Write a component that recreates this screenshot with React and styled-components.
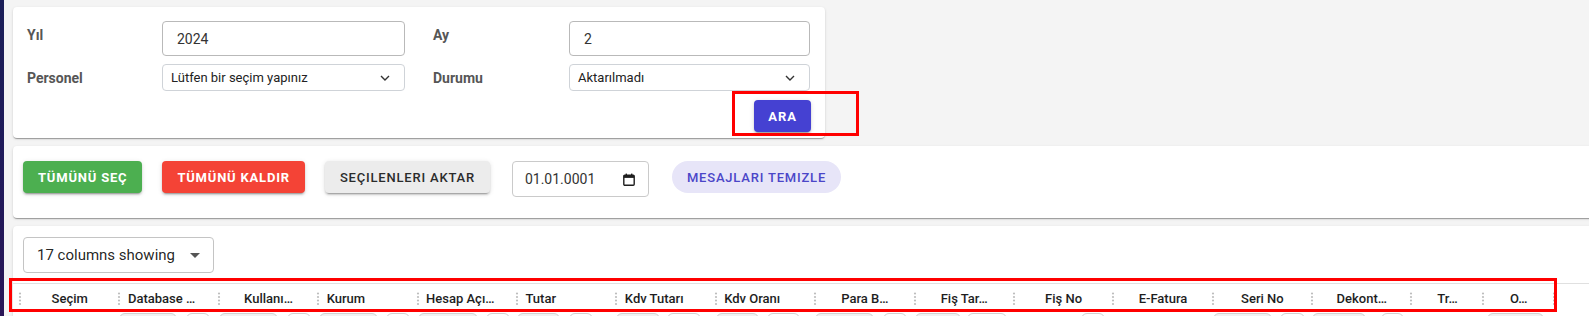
import React from "react";
import styled, { createGlobalStyle } from "styled-components";

const GlobalStyle = createGlobalStyle`
  html, body {
    margin: 0;
    padding: 0;
    background: #f4f4f4;
    overflow: hidden;
  }
  body {
    font-family: Roboto, "Liberation Sans", Arial, sans-serif;
    color: #333;
  }
  * {
    box-sizing: border-box;
  }
`;

const Page = styled.div`
  display: flex;
  width: 1589px;
  height: 316px;
  overflow: hidden;
`;

const SideEdge = styled.div`
  width: 4px;
  flex-shrink: 0;
  background: linear-gradient(180deg, #1b1f58 0%, #201a5a 55%, #2a1657 100%);
`;

const Main = styled.main`
  flex: 1;
  min-width: 0;
  padding: 7px 0 0 9px;
  display: flex;
  flex-direction: column;
  align-items: flex-start;
  gap: 8px;
`;

const Card = styled.section`
  background: #fff;
  border-radius: 4px;
  box-shadow: 0 2px 1px -1px rgba(0, 0, 0, 0.2), 0 1px 1px 0 rgba(0, 0, 0, 0.14),
    0 1px 3px 0 rgba(0, 0, 0, 0.12);
`;

const SearchCard = styled(Card)`
  width: 812px;
  padding: 14px 14px 6px 14px;
`;

const WideCard = styled(Card)`
  align-self: stretch;
  margin-right: -20px;
`;

const FormGrid = styled.div`
  display: grid;
  grid-template-columns: 107px 243px 108px 241px;
  grid-template-rows: 35px 27px;
  column-gap: 28px;
  row-gap: 8px;
`;

const Label = styled.label`
  padding-top: 6px;
  font-size: 14px;
  line-height: 16px;
  font-weight: 700;
  color: #565656;
`;

const TextInput = styled.div`
  display: flex;
  align-items: center;
  height: 35px;
  padding: 0 14px;
  border: 1px solid #b9b9b9;
  border-radius: 4px;
  font-size: 14px;
  color: #333;
`;

const SelectBox = styled.div`
  display: flex;
  align-items: center;
  justify-content: space-between;
  height: 27px;
  padding: 0 14px 0 8px;
  border: 1px solid #cfd3d8;
  border-radius: 4px;
  font-size: 13px;
  color: #222;
`;

const ActionRow = styled.div`
  position: relative;
  display: flex;
  justify-content: flex-end;
  margin-top: 9px;
`;

const Highlight = styled.div`
  position: absolute;
  top: ${(p) => p.$top}px;
  left: ${(p) => (p.$left !== undefined ? `${p.$left}px` : "auto")};
  right: ${(p) => (p.$right !== undefined ? `${p.$right}px` : "auto")};
  width: ${(p) => p.$w}px;
  height: ${(p) => p.$h}px;
  border: 3px solid #ff0000;
  pointer-events: none;
  z-index: 2;
`;

const SearchButton = styled.button`
  height: 32px;
  padding: 0 14px;
  border: none;
  border-radius: 4px;
  background: #4541d2;
  color: #fff;
  font-family: inherit;
  font-size: 13px;
  font-weight: 700;
  letter-spacing: 1px;
  box-shadow: 0 3px 1px -2px rgba(0, 0, 0, 0.2), 0 2px 2px 0 rgba(0, 0, 0, 0.14),
    0 1px 5px 0 rgba(0, 0, 0, 0.12);
`;

const ButtonBar = styled.div`
  display: flex;
  align-items: flex-start;
  gap: 20px;
  padding: 15px 10px 21px;
`;

const variants = {
  success: { bg: "#4caf50", fg: "#fff", weight: 700, radius: 4, shadow: true },
  danger: { bg: "#f44336", fg: "#fff", weight: 700, radius: 4, shadow: true },
  neutral: { bg: "#ececec", fg: "#2b2b2b", weight: 500, radius: 4, shadow: true },
  soft: { bg: "#e7e5f8", fg: "#4b46c8", weight: 500, radius: 16, shadow: false },
};

const ActionButton = styled.button`
  height: 32px;
  padding: 0 15px;
  margin-left: ${(p) => p.$ml || 0}px;
  border: none;
  border-radius: ${(p) => variants[p.$variant].radius}px;
  background: ${(p) => variants[p.$variant].bg};
  color: ${(p) => variants[p.$variant].fg};
  font-family: inherit;
  font-size: 13px;
  font-weight: ${(p) => variants[p.$variant].weight};
  letter-spacing: 0.8px;
  white-space: nowrap;
  box-shadow: ${(p) =>
    variants[p.$variant].shadow
      ? "0 3px 1px -2px rgba(0,0,0,.2), 0 2px 2px 0 rgba(0,0,0,.14), 0 1px 5px 0 rgba(0,0,0,.12)"
      : "none"};
`;

const DateField = styled.div`
  display: flex;
  align-items: center;
  justify-content: space-between;
  width: 137px;
  height: 36px;
  margin-left: 2px;
  padding: 0 13px 0 12px;
  border: 1px solid #cacaca;
  border-radius: 4px;
  font-size: 14px;
  color: #333;
`;

const TableToolbar = styled.div`
  padding: 11px 10px 10px;
`;

const ColumnsSelect = styled.div`
  display: flex;
  align-items: center;
  justify-content: space-between;
  width: 191px;
  height: 36px;
  padding: 0 6px 0 13px;
  border: 1px solid #c4c4c4;
  border-radius: 4px;
  font-size: 15px;
  color: rgba(0, 0, 0, 0.87);
`;

const Grid = styled.div`
  position: relative;
  border-top: 1px solid #e0e0e0;
  min-height: 80px;
`;

const HeaderRow = styled.div`
  display: flex;
  align-items: center;
  height: 29px;
  padding-left: 4px;
`;

const Separator = styled.span`
  display: flex;
  align-items: center;
  justify-content: center;
  width: 6px;
  flex-shrink: 0;
`;

const HeaderCell = styled.div`
  width: ${(p) => p.$w - 6}px;
  flex-shrink: 0;
  padding: 0 5.5px;
  text-align: ${(p) => p.$align};
  font-size: 13px;
  font-weight: 500;
  color: #1e1e1e;
  white-space: nowrap;
  overflow: hidden;
`;

const FilterRow = styled.div`
  display: flex;
  padding-left: 7px;
`;

const FilterCell = styled.div`
  display: flex;
  width: ${(p) => p.$w}px;
  flex-shrink: 0;
`;

const FilterBox = styled.div`
  width: ${(p) => p.$w}px;
  margin-left: ${(p) => p.$ml}px;
  height: 30px;
  border: 1px solid #d0d0d0;
  border-radius: 6px;
  background: ${(p) => (p.$soft ? "#f1f1f1" : "#fff")};
  flex-shrink: 0;
`;

const Chevron = () => (
  <svg width="10" height="6" viewBox="0 0 10 6">
    <path d="M1 1l4 4 4-4" fill="none" stroke="#333" strokeWidth="1.4" />
  </svg>
);

const CalendarIcon = () => (
  <svg width="12" height="13" viewBox="0 0 12 13">
    <rect x="0.8" y="2.3" width="10.4" height="9.9" rx="1" fill="none" stroke="#1f1f1f" strokeWidth="1.4" />
    <rect x="0.8" y="2.3" width="10.4" height="2.6" fill="#1f1f1f" />
    <rect x="2.6" y="0.6" width="1.4" height="2.2" fill="#1f1f1f" />
    <rect x="8" y="0.6" width="1.4" height="2.2" fill="#1f1f1f" />
  </svg>
);

const ArrowDrop = () => (
  <svg width="24" height="24" viewBox="0 0 24 24">
    <path d="M7 10l5 5 5-5z" fill="#555" />
  </svg>
);

const DotsIcon = () => (
  <svg width="4" height="14" viewBox="0 0 4 14">
    {[1.5, 5, 8.5, 12].map((y) => (
      <circle key={y} cx="2" cy={y} r="1.1" fill="#bdbdbd" />
    ))}
  </svg>
);

const W = 99.4;

const columns = [
  { title: "Seçim", align: "center", w: W, filters: [] },
  { title: "Database …", align: "left", w: W, filters: [[0, 58, true], [9, 24]] },
  { title: "Kullanı…", align: "center", w: W, filters: [[0, 59, true], [9, 24]] },
  { title: "Kurum", align: "left", w: W, filters: [[1, 59, true], [8, 24]] },
  { title: "Hesap Açı…", align: "left", w: W, filters: [[0, 60, true], [8, 24]] },
  { title: "Tutar", align: "left", w: W, filters: [[0, 43, true], [9, 24]] },
  { title: "Kdv Tutarı", align: "left", w: W, filters: [[0, 44, true], [7, 34]] },
  { title: "Kdv Oranı", align: "left", w: W, filters: [[0, 43, true], [8, 33]] },
  { title: "Para B…", align: "center", w: W, filters: [[0, 59, true], [9, 24]] },
  { title: "Fiş Tar…", align: "center", w: W, filters: [[0, 46, true], [6, 40]] },
  { title: "Fiş No", align: "center", w: W, filters: [[67, 24]] },
  { title: "E-Fatura", align: "center", w: W, filters: [] },
  { title: "Seri No", align: "center", w: W, filters: [[0, 59, true], [8, 25]] },
  { title: "Dekont…", align: "center", w: W, filters: [[0, 54, true], [15, 23]] },
  { title: "Tr…", align: "center", w: 72, filters: [] },
  { title: "O…", align: "center", w: 70.5, filters: [[4, 57, true]] },
];

const App = () => {
  return (
    <Page>
      <GlobalStyle />
      <SideEdge />
      <Main>
        <SearchCard>
          <FormGrid>
            <Label>Yıl</Label>
            <TextInput>2024</TextInput>
            <Label>Ay</Label>
            <TextInput>2</TextInput>
            <Label>Personel</Label>
            <SelectBox>
              <span>Lütfen bir seçim yapınız</span>
              <Chevron />
            </SelectBox>
            <Label>Durumu</Label>
            <SelectBox>
              <span>Aktarılmadı</span>
              <Chevron />
            </SelectBox>
          </FormGrid>
          <ActionRow>
            <SearchButton>ARA</SearchButton>
            <Highlight $top={-9} $right={-48} $w={127} $h={45} />
          </ActionRow>
        </SearchCard>

        <WideCard>
          <ButtonBar>
            <ActionButton $variant="success">TÜMÜNÜ SEÇ</ActionButton>
            <ActionButton $variant="danger">TÜMÜNÜ KALDIR</ActionButton>
            <ActionButton $variant="neutral">SEÇILENLERI AKTAR</ActionButton>
            <DateField>
              <span>01.01.0001</span>
              <CalendarIcon />
            </DateField>
            <ActionButton $variant="soft" $ml={3}>
              MESAJLARI TEMIZLE
            </ActionButton>
          </ButtonBar>
        </WideCard>

        <WideCard>
          <TableToolbar>
            <ColumnsSelect>
              <span>17 columns showing</span>
              <ArrowDrop />
            </ColumnsSelect>
          </TableToolbar>
          <Grid>
            <HeaderRow>
              <Separator>
                <DotsIcon />
              </Separator>
              {columns.map((c) => (
                <React.Fragment key={c.title}>
                  <HeaderCell $w={c.w} $align={c.align}>
                    {c.title}
                  </HeaderCell>
                  <Separator>
                    <DotsIcon />
                  </Separator>
                </React.Fragment>
              ))}
            </HeaderRow>
            <FilterRow>
              {columns.map((c) => (
                <FilterCell key={c.title} $w={c.w}>
                  {c.filters.map(([ml, w, soft], i) => (
                    <FilterBox key={i} $ml={ml} $w={w} $soft={soft} />
                  ))}
                </FilterCell>
              ))}
            </FilterRow>
            <Highlight $top={-6} $left={-4} $w={1548} $h={34} />
          </Grid>
        </WideCard>
      </Main>
    </Page>
  );
};

export default App;
